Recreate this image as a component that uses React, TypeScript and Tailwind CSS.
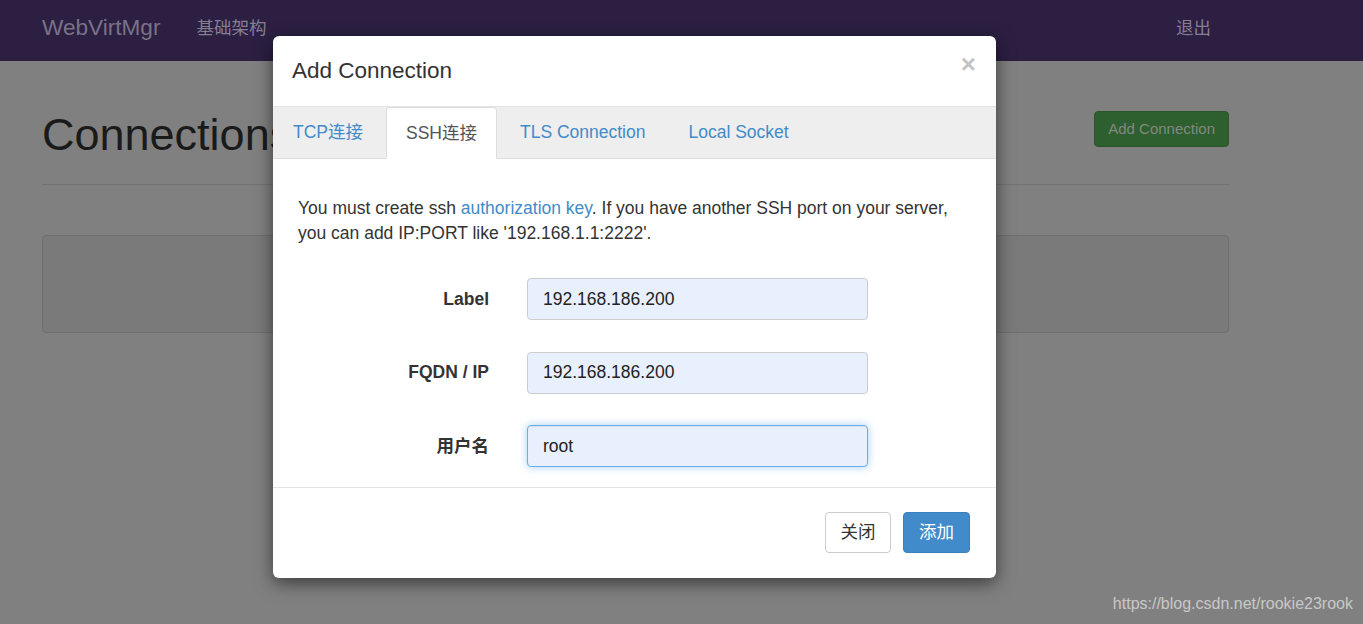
import React from "react";

const FONT = { fontFamily: '"Liberation Sans", Arial, "Noto Sans CJK SC", sans-serif' };

function Field({ label, value, focused }: { label: string; value: string; focused?: boolean }) {
  return (
    <div className="flex items-center">
      <div className="w-[191px] text-right font-bold text-[17.5px] text-[#333]">{label}</div>
      <div
        className={
          "ml-[38px] w-[341px] h-[42px] rounded-[4px] bg-[#e8f0fe] flex items-center pl-[15px] text-[17.5px] text-[#222] border " +
          (focused
            ? "border-[#66afe9] shadow-[inset_0_1px_1px_rgba(0,0,0,0.075),0_0_8px_rgba(102,175,233,0.6)]"
            : "border-[#cccccc]")
        }
      >
        {value}
      </div>
    </div>
  );
}

export default function App() {
  return (
    <div className="relative w-full h-[624px] overflow-hidden bg-[#808080]" style={FONT}>
      {/* Navbar */}
      <div className="h-[61px] bg-[#2c1f42] flex items-center pb-[4px] pl-[42px] pr-[152px]">
        <span className="text-[22.6px] text-[#7a7288] leading-none">WebVirtMgr</span>
        <span className="ml-[36px] text-[17.5px] text-[#857e93] leading-none">基础架构</span>
        <span className="ml-auto text-[17.5px] text-[#857e93] leading-none">退出</span>
      </div>

      {/* Page */}
      <div className="ml-[42px] w-[1187px]">
        <div className="pt-[50px] pb-[25px] border-b border-[#727272] flex justify-between items-start">
          <h1 className="text-[45px] leading-[48px] text-[#1a1a1a] font-normal">Connections</h1>
          <button className="h-[36px] px-[13px] rounded-[4px] bg-[#2e5f2e] border border-[#2a562a] text-[15px] text-[#808a80]">
            Add Connection
          </button>
        </div>
        <div className="mt-[50px] h-[98px] rounded-[4px] bg-[#7a7a7a] border border-[#6f6f6f]" />
      </div>

      {/* Modal */}
      <div className="absolute left-[273px] top-[36px] w-[723px] rounded-[6px] bg-white shadow-[0_5px_18px_rgba(0,0,0,0.55)]">
        <div className="relative h-[70px] flex items-center px-[19px]">
          <span className="text-[22.5px] text-[#333]">Add Connection</span>
          <span className="absolute right-[20px] top-[15px] text-[26px] font-bold leading-none text-[#c4c4c4]">×</span>
        </div>
        <div className="h-[53px] bg-[#eeeeee] border-t border-b border-t-[#e5e5e5] border-b-[#dddddd] flex text-[17.5px]">
          <div className="px-[20px] mr-[3px] flex items-center text-[#428bca]">TCP连接</div>
          <div className="px-[19px] mr-[3px] h-[52px] -mb-px bg-white border border-[#dddddd] border-b-white rounded-t-[4px] flex items-center text-[#555]">
            SSH连接
          </div>
          <div className="px-[20px] mr-[3px] flex items-center text-[#428bca]">TLS Connection</div>
          <div className="px-[20px] mr-[3px] flex items-center text-[#428bca]">Local Socket</div>
        </div>
        <div className="px-[25px] pt-[37px] pb-[20px]">
          <p className="text-[17.5px] leading-[25px] text-[#333]">
            You must create ssh <span className="text-[#428bca]">authorization key</span>. If you have another SSH port on your server,
            <br />
            you can add IP:PORT like '192.168.1.1:2222'.
          </p>
          <div className="mt-[32px] flex flex-col gap-[31.5px]">
            <Field label="Label" value="192.168.186.200" />
            <Field label="FQDN / IP" value="192.168.186.200" />
            <Field label="用户名" value="root" focused />
          </div>
        </div>
        <div className="border-t border-[#e5e5e5] pt-[24px] pb-[25px] pr-[26px] flex justify-end gap-[12px]">
          <button className="w-[66px] h-[41px] rounded-[4px] bg-white border border-[#cccccc] text-[17.5px] text-[#333]">关闭</button>
          <button className="w-[67px] h-[41px] rounded-[4px] bg-[#428bca] border border-[#3a80bf] text-[17.5px] text-white">添加</button>
        </div>
      </div>

      {/* Watermark */}
      <div className="absolute right-[10px] bottom-[10px] text-[16px] leading-[20px] text-[#c8c8c8]">
        https://blog.csdn.net/rookie23rook
      </div>
    </div>
  );
}
